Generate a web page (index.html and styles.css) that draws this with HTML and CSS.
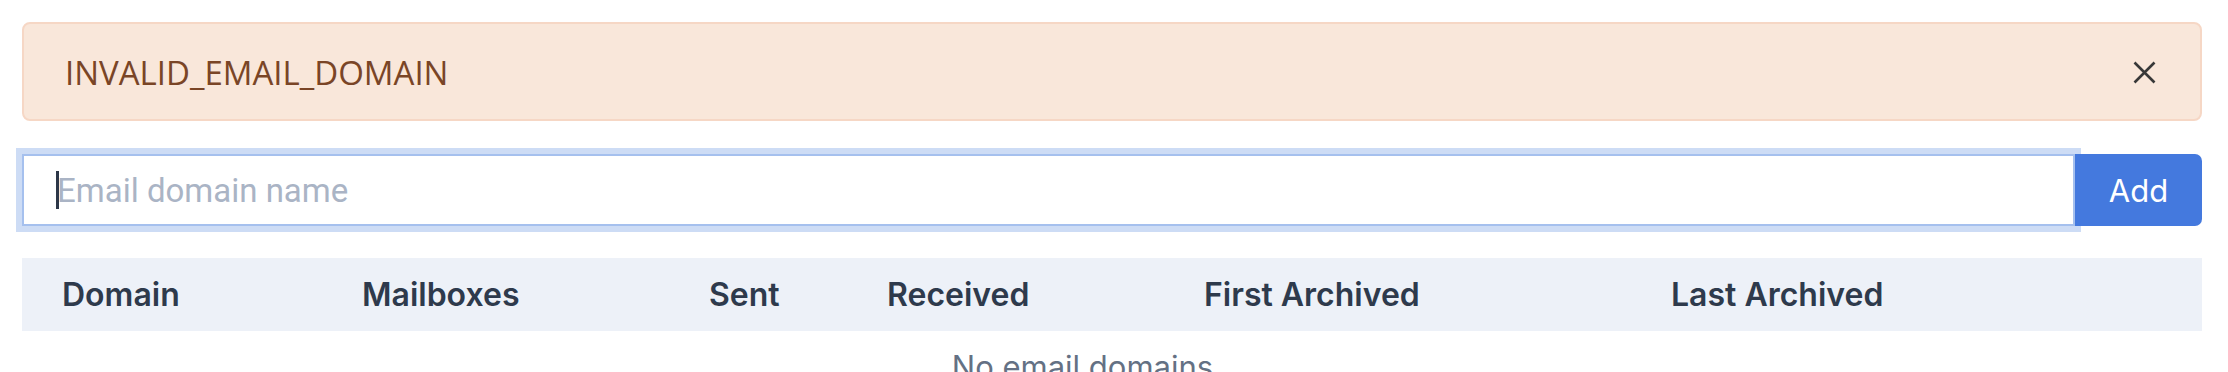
FILE: index.html
```html
<!DOCTYPE html>
<html lang="en">
<head>
<meta charset="utf-8">
<title>Email domains</title>
<link rel="stylesheet" href="styles.css">
</head>
<body>
<div class="page">
  <div class="alert">
    <span class="alert-text">INVALID_EMAIL_DOMAIN</span>
    <button class="alert-close" aria-label="Close">
      <svg width="23" height="23" viewBox="0 0 23 23"><path d="M1.5 1.5 L21.5 21.5 M21.5 1.5 L1.5 21.5" stroke="#383838" stroke-width="2.6" stroke-linecap="butt" fill="none"/></svg>
    </button>
  </div>

  <form class="addform">
    <div class="field">
      <input class="field-input" type="text" placeholder="Email domain name">
      <span class="caret"></span>
    </div>
    <button class="add-btn" type="button">Add</button>
  </form>

  <div class="table">
    <div class="thead">
      <div class="th">Domain</div>
      <div class="th">Mailboxes</div>
      <div class="th">Sent</div>
      <div class="th">Received</div>
      <div class="th">First Archived</div>
      <div class="th">Last Archived</div>
    </div>
    <div class="empty">No email domains</div>
  </div>
</div>
</body>
</html>
```

FILE: styles.css
```css
html, body {
  margin: 0;
  padding: 0;
  background: #ffffff;
}

.page {
  padding: 22px 26px 0 22px;
  font-family: Inter, "Noto Sans", sans-serif;
}

.alert {
  box-sizing: border-box;
  height: 99px;
  display: flex;
  align-items: center;
  justify-content: space-between;
  padding: 2px 44px 0 41px;
  background: #f9e7da;
  border: 2px solid #f6d7c5;
  border-radius: 8px;
}

.alert-text {
  font-family: "Open Sans", sans-serif;
  font-size: 33px;
  font-weight: 400;
  color: #7a4526;
  letter-spacing: 0;
}

.alert-close {
  display: flex;
  padding: 0;
  margin: 0;
  border: 0;
  background: transparent;
  cursor: pointer;
}

.addform {
  display: flex;
  height: 72px;
  margin: 33px 0 0 0;
}

.field {
  position: relative;
  flex: 1;
  display: flex;
}

.field-input {
  box-sizing: border-box;
  flex: 1;
  width: 100%;
  height: 72px;
  margin: 0;
  padding: 0 0 0 33px;
  border: 2px solid #a5c0ee;
  box-shadow: 0 0 0 6px #cddcf5;
  border-radius: 0;
  outline: none;
  font-family: Roboto, sans-serif;
  font-size: 33px;
  color: #2d3748;
  background: #ffffff;
}

.field-input::placeholder {
  color: #aab4c5;
  opacity: 1;
}

.caret {
  position: absolute;
  left: 34px;
  top: 17px;
  width: 3px;
  height: 38px;
  background: #2d3748;
}

.add-btn {
  position: relative;
  box-sizing: border-box;
  width: 127px;
  height: 72px;
  margin: 0;
  padding: 0;
  border: 0;
  border-radius: 0 7px 7px 0;
  background: #4479de;
  color: #ffffff;
  font-family: Inter, sans-serif;
  font-size: 31px;
  font-weight: 400;
}

.table {
  margin-top: 32px;
}

.thead {
  display: grid;
  grid-template-columns: 300px 347px 178px 317px 467px 1fr;
  height: 73px;
  align-items: center;
  background: #edf1f8;
}

.th {
  padding-left: 40px;
  font-size: 32px;
  font-weight: 600;
  color: #2e3a4c;
  white-space: nowrap;
}

.empty {
  padding: 16px 59px 0 0;
  text-align: center;
  font-size: 31px;
  line-height: 40px;
  color: #647184;
}
```
